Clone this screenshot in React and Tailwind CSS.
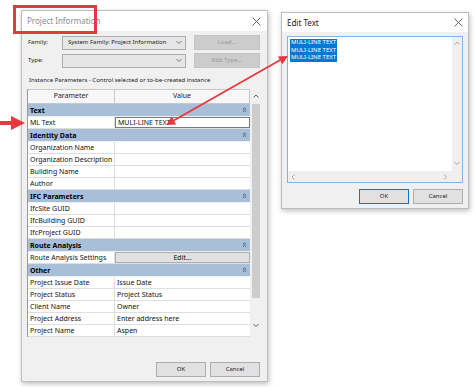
import React from "react";

const font = { fontFamily: '"Noto Sans", "Open Sans", sans-serif' };

function Chevron({ dir = "down", className = "" }) {
  const d = dir === "down" ? "M1.5 2 L4 4.5 L6.5 2" : dir === "up" ? "M1.5 4.5 L4 2 L6.5 4.5" : dir === "left" ? "M4.5 1.5 L2 4 L4.5 6.5" : "M2 1.5 L4.5 4 L2 6.5";
  return (
    <svg width="8" height="8" viewBox="0 0 8 8" className={className}>
      <path d={d} fill="none" stroke="currentColor" strokeWidth="1" />
    </svg>
  );
}

function Collapse() {
  return (
    <svg width="5" height="6" viewBox="0 0 5 6" className="text-[#3d4f66]">
      <path d="M0.8 2.5 L2.5 1 L4.2 2.5 M0.8 4.8 L2.5 3.3 L4.2 4.8" fill="none" stroke="currentColor" strokeWidth="0.9" />
    </svg>
  );
}

function CloseX() {
  return (
    <svg width="9" height="9" viewBox="0 0 9 9" className="text-[#555]">
      <path d="M0.5 0.5 L8.5 8.5 M8.5 0.5 L0.5 8.5" stroke="currentColor" strokeWidth="0.9" />
    </svg>
  );
}

function Group({ title }) {
  return (
    <div className="h-[13px] bg-[#a9bfd9] flex items-center justify-between pl-[2px] pr-[3px] border-b border-[#f0f0f0]">
      <span className="text-[7px] font-bold text-black leading-none">{title}</span>
      <Collapse />
    </div>
  );
}

function Row({ name, value, children }) {
  return (
    <div className="h-[12px] flex bg-white border-b border-[#dedede]">
      <div className="w-[87px] shrink-0 border-r border-[#dedede] pl-[2px] flex items-center text-[7px] leading-none text-[#111] whitespace-nowrap overflow-hidden">
        {name}
      </div>
      <div className="flex-1 flex items-center pl-[2px] text-[7px] leading-none text-[#111] whitespace-nowrap">
        {children || value}
      </div>
    </div>
  );
}

function Btn({ children, className = "" }) {
  return (
    <div className={"w-[50px] h-[15px] bg-[#e1e1e1] border border-[#adadad] flex items-center justify-center text-[6px] text-[#222] " + className}>
      {children}
    </div>
  );
}

function MainDialog() {
  return (
    <div className="absolute left-[21px] top-[10px] w-[247px] h-[372px] bg-[#f0f0f0] border border-[#bdbdbd] shadow-[1px_2px_5px_rgba(0,0,0,0.25)] flex flex-col">
      <div className="h-[20px] bg-white flex items-center justify-between pl-[5px] pr-[6px]">
        <span className="text-[8px] text-[#8d8d8d] leading-none">Project Information</span>
        <CloseX />
      </div>
      <div className="flex flex-col pl-[5px] pr-[6px] pt-[4px] flex-1">
        <div className="flex items-center h-[15px]">
          <span className="w-[35px] text-[6px] text-[#222] pl-[1px]">Family:</span>
          <div className="w-[124px] h-[14px] bg-[#e6e6e6] border border-[#adadad] flex items-center justify-between pl-[5px] pr-[2px]">
            <span className="text-[6px] text-[#222] whitespace-nowrap">System Family: Project Information</span>
            <Chevron className="text-[#777]" />
          </div>
          <div className="ml-[8px] w-[66px] h-[15px] bg-[#cccccc] border border-[#c4c4c4] flex items-center justify-center text-[6px] text-[#9a9a9a]">Load...</div>
        </div>
        <div className="flex items-center h-[15px] mt-[3px]">
          <span className="w-[35px] text-[6px] text-[#222] pl-[1px]">Type:</span>
          <div className="w-[124px] h-[14px] bg-[#e6e6e6] border border-[#adadad] flex items-center justify-end pr-[2px]">
            <Chevron className="text-[#777]" />
          </div>
          <div className="ml-[8px] w-[66px] h-[15px] bg-[#cccccc] border border-[#c4c4c4] flex items-center justify-center text-[6px] text-[#9a9a9a]">Edit Type...</div>
        </div>
        <div className="mt-[7px] h-[10px] flex items-center text-[6px] text-[#222] whitespace-nowrap pl-[2px]">
          Instance Parameters - Control selected or to-be-created instance
        </div>
        <div className="mt-[4px] flex h-[248px]">
          <div className="w-[224px] flex flex-col border-l border-[#9a9a9a]">
            <div className="h-[15px] flex bg-[#f7f7f7] border-t border-b border-[#c8c8c8] text-[7px] text-[#222]">
              <div className="w-[87px] border-r border-[#c8c8c8] flex items-center justify-center">Parameter</div>
              <div className="flex-1 flex items-center justify-center border-r border-[#c8c8c8]">Value</div>
            </div>
            <Group title="Text" />
            <div className="h-[12px] flex bg-white border-b border-[#dedede]">
              <div className="w-[87px] shrink-0 border-r border-[#dedede] pl-[2px] flex items-center text-[7px] leading-none text-[#111]">ML Text</div>
              <div className="flex-1 flex items-center pl-[2px] text-[7px] leading-none text-[#111] border border-[#7a7a7a]">MULI-LINE TEXT</div>
            </div>
            <Group title="Identity Data" />
            <Row name="Organization Name" />
            <Row name="Organization Description" />
            <Row name="Building Name" />
            <Row name="Author" />
            <Group title="IFC Parameters" />
            <Row name="IfcSite GUID" />
            <Row name="IfcBuilding GUID" />
            <Row name="IfcProject GUID" />
            <Group title="Route Analysis" />
            <div className="h-[12px] flex bg-white border-b border-[#dedede]">
              <div className="w-[87px] shrink-0 border-r border-[#dedede] pl-[2px] flex items-center text-[7px] leading-none text-[#111] whitespace-nowrap">Route Analysis Settings</div>
              <div className="flex-1 flex items-center justify-center bg-[#e1e1e1] border border-[#adadad] text-[7px] leading-none text-[#111]">Edit...</div>
            </div>
            <Group title="Other" />
            <Row name="Project Issue Date" value="Issue Date" />
            <Row name="Project Status" value="Project Status" />
            <Row name="Client Name" value="Owner" />
            <Row name="Project Address" value="Enter address here" />
            <Row name="Project Name" value="Aspen" />
          </div>
          <div className="w-[10px] ml-[1px] flex flex-col bg-[#f0f0f0] h-[248px]">
            <div className="h-[15px] flex items-center justify-center text-[#606060]"><Chevron dir="up" /></div>
            <div className="h-[194px] bg-[#cdcdcd] mx-[1px]" />
            <div className="flex-1" />
            <div className="h-[14px] flex items-center justify-center text-[#606060] mb-[4px]"><Chevron dir="down" /></div>
          </div>
        </div>
        <div className="flex-1" />
        <div className="flex justify-end gap-[4px] mb-[4px] pr-[1px]">
          <Btn>OK</Btn>
          <Btn>Cancel</Btn>
        </div>
      </div>
    </div>
  );
}

function EditDialog() {
  return (
    <div className="absolute left-[281px] top-[12px] w-[188px] h-[197px] bg-[#f0f0f0] border border-[#bdbdbd] shadow-[1px_2px_5px_rgba(0,0,0,0.25)] flex flex-col">
      <div className="h-[19px] bg-white flex items-center justify-between pl-[5px] pr-[5px]">
        <span className="text-[8px] text-[#222] leading-none">Edit Text</span>
        <CloseX />
      </div>
      <div className="flex flex-col px-[5px] pt-[4px] flex-1">
        <div className="h-[147px] border border-[#7eb4ea] bg-white flex flex-col">
          <div className="flex flex-1">
            <div className="flex-1 pt-[2px] pl-[2px] flex flex-col items-start">
              {[0, 1, 2].map((i) => (
                <span key={i} className="bg-[#0078d7] text-white text-[6px] leading-[7.7px] px-[1px] whitespace-nowrap">MULI-LINE TEXT</span>
              ))}
            </div>
            <div className="w-[10px] bg-[#f0f0f0] flex flex-col justify-between items-center text-[#a8a8a8] py-[3px]">
              <Chevron dir="up" />
              <Chevron dir="down" />
            </div>
          </div>
          <div className="h-[11px] flex">
            <div className="flex-1 bg-[#f0f0f0] flex items-center justify-between text-[#a8a8a8] px-[2px]">
              <Chevron dir="left" />
              <Chevron dir="right" />
            </div>
            <div className="w-[10px] bg-[#f0f0f0]" />
          </div>
        </div>
        <div className="flex justify-end gap-[4px] mt-[6px]">
          <Btn className="!border-[#0078d7] h-[14px]">OK</Btn>
          <Btn className="h-[14px]">Cancel</Btn>
        </div>
      </div>
    </div>
  );
}

export default function App() {
  return (
    <div className="relative w-[474px] h-[387px] bg-white overflow-hidden" style={font}>
      <MainDialog />
      <EditDialog />
      <svg className="absolute inset-0 pointer-events-none" width="474" height="387" viewBox="0 0 474 387">
        <rect x="14.5" y="6.5" width="81" height="26" fill="none" stroke="#e5393f" strokeWidth="3" />
        <line x1="172" y1="121.5" x2="282" y2="59" stroke="#e5393f" strokeWidth="1.8" />
        <polygon points="166,125 171.8,116.6 176.2,124.4" fill="#e5393f" />
        <polygon points="288,56 282.4,64.3 277.9,56.5" fill="#e5393f" />
        <rect x="0" y="121" width="13" height="4" fill="#e5393f" />
        <polygon points="11,116 25,123 11,130" fill="#e5393f" />
      </svg>
    </div>
  );
}
